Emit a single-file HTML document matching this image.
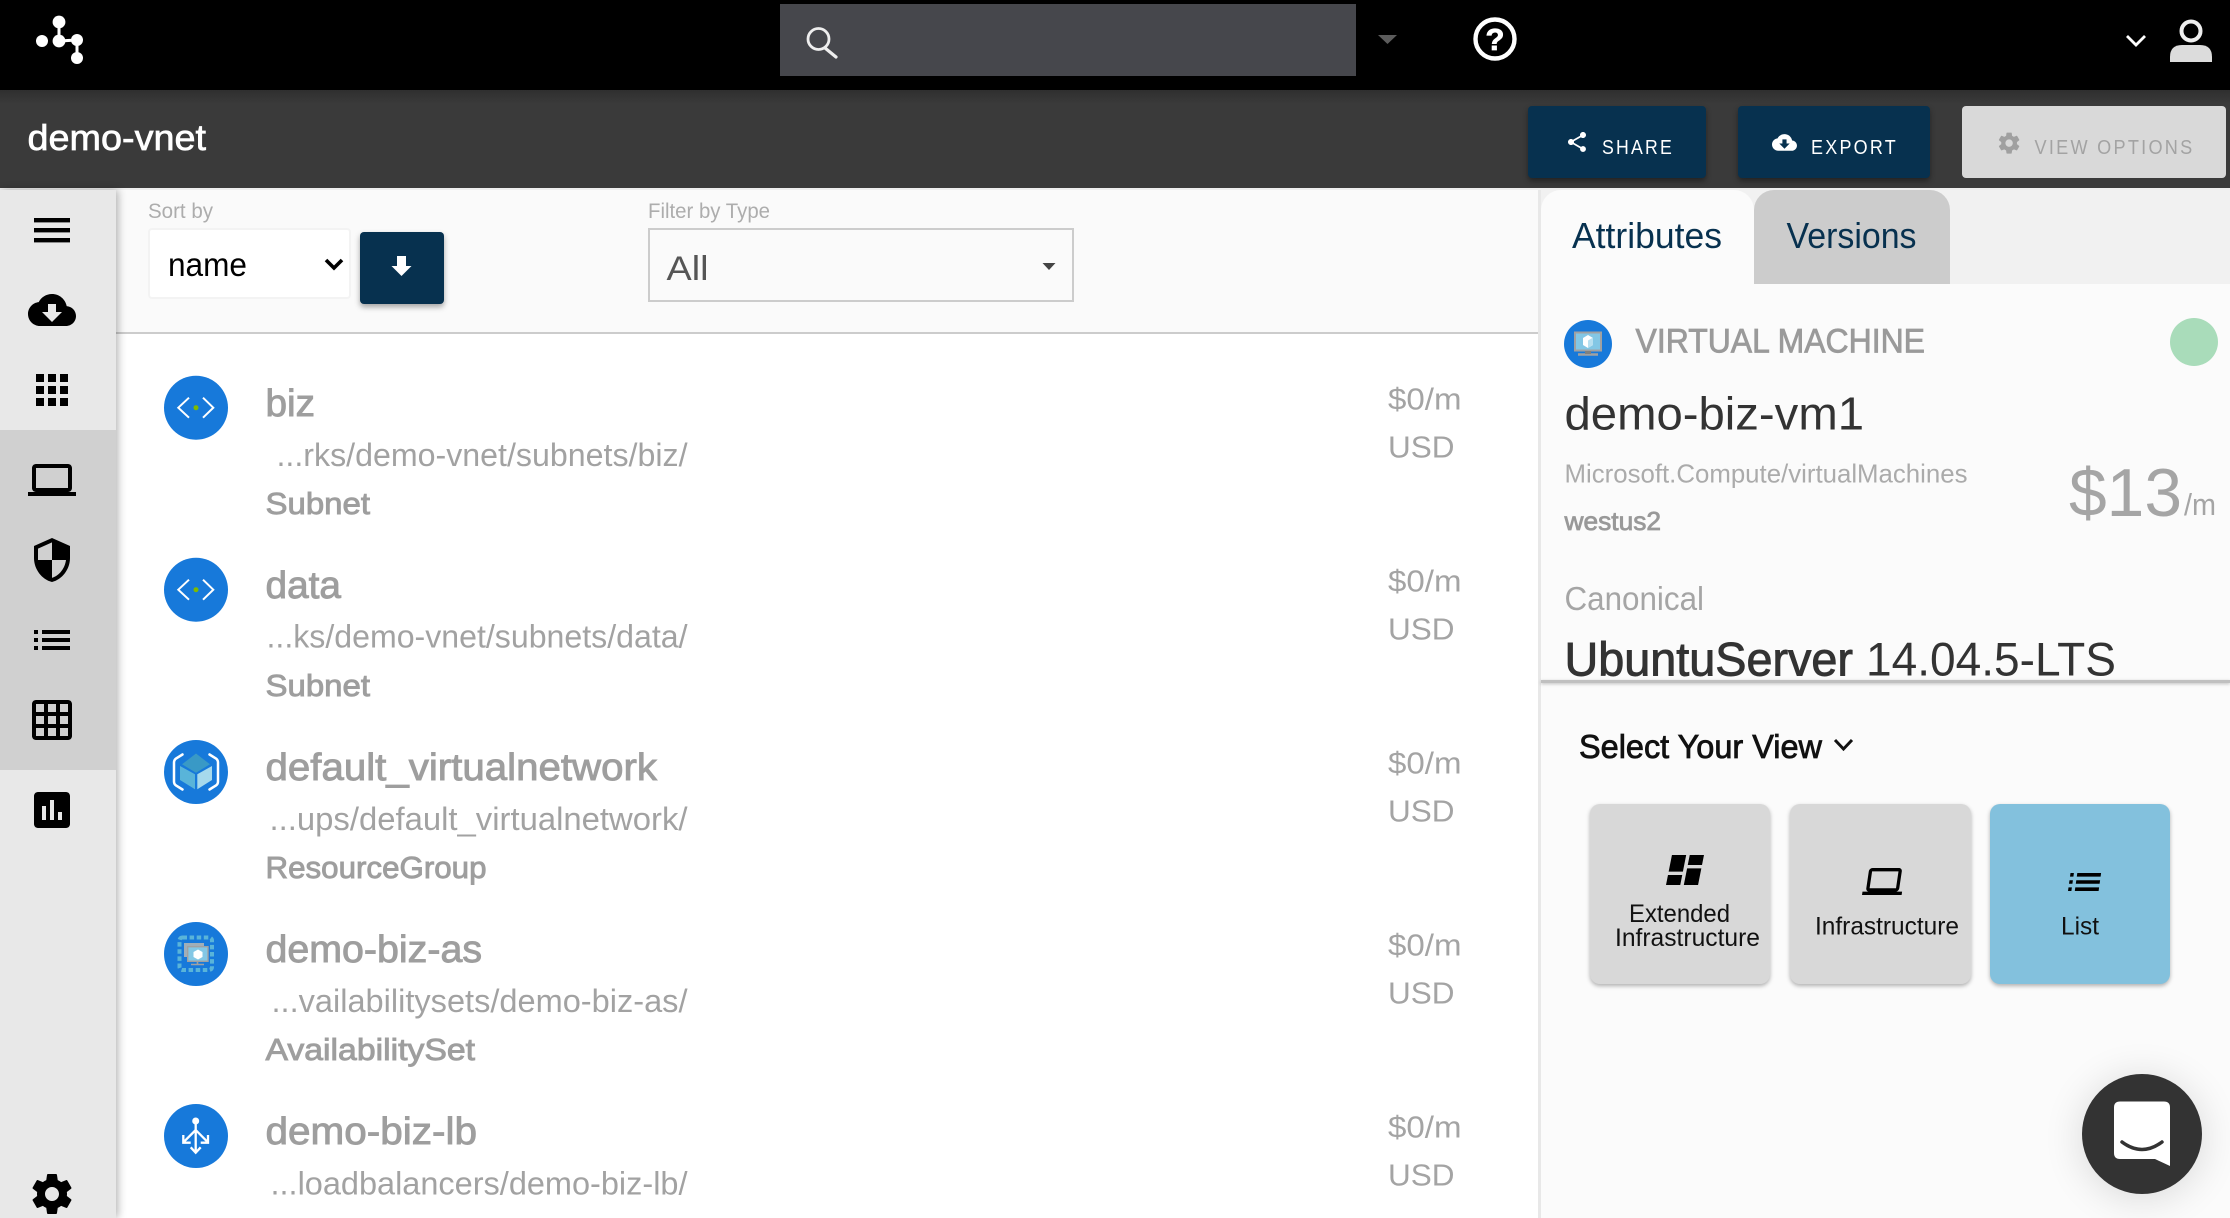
<!DOCTYPE html>
<html><head><meta charset="utf-8"><title>demo-vnet</title>
<style>
html,body{margin:0;padding:0;background:#fff}
#r{position:relative;width:2230px;height:1218px;overflow:hidden;background:#fff;font-family:"Liberation Sans",sans-serif}
#r div{position:absolute;box-sizing:border-box}
svg{position:absolute;left:0;top:0}
text{font-family:"Liberation Sans",sans-serif}
.n{font-size:38px;fill:#9e9e9e;stroke:#9e9e9e;stroke-width:.9}
.p{font-size:32px;fill:#a2a2a2}
.t{font-size:31px;fill:#9e9e9e;stroke:#9e9e9e;stroke-width:.9}
.c{font-size:31px;fill:#a4a4a4}
.b{font-size:20px;fill:#fff;letter-spacing:2.5px}
.l{font-size:21px;fill:#adadad}
.k{font-size:25px;fill:#111}
</style></head><body>
<div id="r">
<div style="left:0;top:0;width:2230px;height:90px;background:#000"></div>
<div style="left:0;top:90px;width:2230px;height:98px;background:linear-gradient(#2f2f2f,#3a3a3a 14px,#3a3a3a)"></div>
<div style="left:0;top:188px;width:2230px;height:2px;background:#eee"></div>
<div style="left:780px;top:4px;width:576px;height:72px;background:#46474c"></div>
<div style="left:1528px;top:106px;width:178px;height:72px;background:#07314f;border-radius:4px;box-shadow:0 3px 6px rgba(0,0,0,.4)"></div>
<div style="left:1738px;top:106px;width:192px;height:72px;background:#07314f;border-radius:4px;box-shadow:0 3px 6px rgba(0,0,0,.4)"></div>
<div style="left:1962px;top:106px;width:264px;height:72px;background:#d9d9d9;border-radius:4px"></div>
<div style="left:116px;top:190px;width:1422px;height:142px;background:#fafafa"></div>
<div style="left:116px;top:332px;width:1422px;height:2px;background:#ccc"></div>
<div style="left:0;top:190px;width:116px;height:1028px;background:#e8e8e8;box-shadow:2px 0 8px rgba(0,0,0,.3)"></div>
<div style="left:0;top:430px;width:116px;height:340px;background:#d0d0d0"></div>
<div style="left:148px;top:228px;width:203px;height:71px;background:#fff;border:2px solid #f3f3f3;border-radius:4px"></div>
<div style="left:360px;top:232px;width:84px;height:72px;background:#07314f;border-radius:4px;box-shadow:0 3px 6px rgba(0,0,0,.35)"></div>
<div style="left:648px;top:228px;width:426px;height:74px;border:2px solid #ccc;background:#fafafa"></div>
<div style="left:1538px;top:190px;width:692px;height:1028px;background:#fbfbfb;border-left:3px solid #e8e8e8"></div>
<div style="left:1541px;top:190px;width:689px;height:94px;background:#f1f1f1"></div>
<div style="left:1541px;top:190px;width:213px;height:94px;background:#fbfbfb;border-radius:20px 20px 0 0"></div>
<div style="left:1754px;top:190px;width:196px;height:94px;background:#ccc;border-radius:20px 20px 0 0"></div>
<div style="left:1541px;top:680px;width:689px;height:3px;background:#c0c0c0;box-shadow:0 1px 3px rgba(0,0,0,.25)"></div>
<div style="left:1590px;top:804px;width:180px;height:180px;background:#d8d8d8;border-radius:10px;box-shadow:0 2px 4px rgba(0,0,0,.3)"></div>
<div style="left:1790px;top:804px;width:181px;height:180px;background:#d8d8d8;border-radius:10px;box-shadow:0 2px 4px rgba(0,0,0,.3)"></div>
<div style="left:1990px;top:804px;width:180px;height:180px;background:#83c1dd;border-radius:10px;box-shadow:0 2px 4px rgba(0,0,0,.3)"></div>
<div style="left:2082px;top:1074px;width:120px;height:120px;background:#333;border-radius:50%;box-shadow:0 4px 40px rgba(0,0,0,.14)"></div>

<svg width="2230" height="1218" viewBox="0 0 2230 1218" xmlns="http://www.w3.org/2000/svg">
<!-- logo -->
<g fill="#fff" stroke="none"><circle cx="59" cy="22" r="6.4"/><circle cx="42" cy="41" r="6"/><circle cx="59" cy="41" r="6.4"/><circle cx="77" cy="40" r="6"/><circle cx="77" cy="58" r="6"/></g>
<path d="M59 22V41L77 40V58" fill="none" stroke="#fff" stroke-width="3"/>
<!-- search -->
<circle cx="818.5" cy="39" r="10.5" fill="none" stroke="#eee" stroke-width="2.8"/>
<path d="M825 48L836 57" stroke="#eee" stroke-width="3.2" stroke-linecap="round"/>
<path d="M1378 35H1397L1387.5 44Z" fill="#5c5c5c"/>
<circle cx="1495" cy="39" r="19.5" fill="none" stroke="#fff" stroke-width="4.4"/>
<text x="1495" y="50" text-anchor="middle" font-size="31" font-weight="700" fill="#fff" stroke="#fff" stroke-width=".8">?</text>
<path d="M2127 36L2136 45L2145 36" fill="none" stroke="#fff" stroke-width="2.8"/>
<circle cx="2191" cy="31" r="9.5" fill="none" stroke="#eee" stroke-width="4"/>
<path d="M2170 62V57Q2170 45 2182 45H2200Q2212 45 2212 57V62Z" fill="#dcdcdc"/>
<!-- subheader -->
<text x="27.5" y="150" font-size="36" fill="#fff" stroke="#fff" stroke-width=".7" textLength="178.5" lengthAdjust="spacingAndGlyphs">demo-vnet</text>
<g fill="#fff"><path transform="translate(1565,130)" d="M18 16.08c-.76 0-1.44.3-1.96.77L8.91 12.7c.05-.23.09-.46.09-.7s-.04-.47-.09-.7l7.05-4.11c.54.5 1.25.81 2.04.81 1.66 0 3-1.34 3-3s-1.34-3-3-3-3 1.34-3 3c0 .24.04.47.09.7L8.04 9.81C7.5 9.31 6.79 9 6 9c-1.66 0-3 1.34-3 3s1.34 3 3 3c.79 0 1.5-.31 2.04-.81l7.12 4.16c-.05.21-.08.43-.08.65 0 1.61 1.31 2.92 2.92 2.92 1.61 0 2.92-1.31 2.92-2.92s-1.31-2.92-2.92-2.92z"/>
<path transform="translate(1772,130) scale(1.04)" d="M19.35 10.04C18.67 6.59 15.64 4 12 4 9.11 4 6.6 5.64 5.35 8.04 2.34 8.36 0 10.91 0 14c0 3.31 2.69 6 6 6h13c2.76 0 5-2.24 5-5 0-2.64-2.05-4.78-4.65-4.96zM17 13l-5 5-5-5h3V9h4v4h3z"/></g>
<text class="b" x="1602" y="154" textLength="72" lengthAdjust="spacingAndGlyphs">SHARE</text>
<text class="b" x="1811" y="154" textLength="87" lengthAdjust="spacingAndGlyphs">EXPORT</text>
<path fill="#a0a0a0" transform="translate(1996.5,130.5) scale(1.05)" d="M19.43 12.98c.04-.32.07-.64.07-.98s-.03-.66-.07-.98l2.11-1.65c.19-.15.24-.42.12-.64l-2-3.46c-.12-.22-.39-.3-.61-.22l-2.49 1c-.52-.4-1.08-.73-1.69-.98l-.38-2.65C14.46 2.18 14.25 2 14 2h-4c-.25 0-.46.18-.49.42l-.38 2.65c-.61.25-1.17.59-1.69.98l-2.49-1c-.23-.09-.49 0-.61.22l-2 3.46c-.13.22-.07.49.12.64l2.11 1.65c-.04.32-.07.65-.07.98s.03.66.07.98l-2.11 1.65c-.19.15-.24.42-.12.64l2 3.46c.12.22.39.3.61.22l2.49-1c.52.4 1.08.73 1.69.98l.38 2.65c.03.24.24.42.49.42h4c.25 0 .46-.18.49-.42l.38-2.65c.61-.25 1.17-.59 1.69-.98l2.49 1c.23.09.49 0 .61-.22l2-3.46c.12-.22.07-.49-.12-.64l-2.11-1.65zM12 15.5c-1.93 0-3.5-1.57-3.5-3.5s1.57-3.5 3.5-3.5 3.5 1.57 3.5 3.5-1.57 3.5-3.5 3.5z"/>
<text x="2034.5" y="154" font-size="20" letter-spacing="2.5" fill="#a3a3a3" textLength="160" lengthAdjust="spacingAndGlyphs">VIEW OPTIONS</text>
<!-- sidebar icons -->
<g fill="#000">
<rect x="34" y="218" width="36" height="4.4"/><rect x="34" y="228" width="36" height="4.4"/><rect x="34" y="238" width="36" height="4.4"/>
<path transform="translate(28,286) scale(2)" d="M19.35 10.04C18.67 6.59 15.64 4 12 4 9.11 4 6.6 5.64 5.35 8.04 2.34 8.36 0 10.91 0 14c0 3.31 2.69 6 6 6h13c2.76 0 5-2.24 5-5 0-2.64-2.05-4.78-4.65-4.96zM17 13l-5 5-5-5h3V9h4v4h3z"/>
<path transform="translate(28,366) scale(2)" d="M4 8h4V4H4v4zm6 12h4v-4h-4v4zm-6 0h4v-4H4v4zm0-6h4v-4H4v4zm6 0h4v-4h-4v4zm6-10v4h4V4h-4zm-6 4h4V4h-4v4zm6 6h4v-4h-4v4zm0 6h4v-4h-4v4z"/>
<path transform="translate(28,456) scale(2)" d="M20 18c1.1 0 1.99-.9 1.99-2L22 6c0-1.1-.9-2-2-2H4c-1.1 0-2 .9-2 2v10c0 1.1.9 2 2 2H0v2h24v-2h-4zM4 6h16v10H4V6z"/>
<path transform="translate(28,536) scale(2)" d="M12 1L3 5v6c0 5.55 3.84 10.74 9 12 5.16-1.26 9-6.45 9-12V5l-9-4zm0 10.99h7c-.53 4.12-3.28 7.79-7 8.94V12H5V6.3l7-3.11v8.8z"/>
<path transform="translate(28,616) scale(2)" d="M3 13h2v-2H3v2zm0 4h2v-2H3v2zm0-8h2V7H3v2zm4 4h14v-2H7v2zm0 4h14v-2H7v2zM7 7v2h14V7H7z"/>
<path transform="translate(28,696) scale(2)" d="M20 2H4c-1.1 0-2 .9-2 2v16c0 1.1.9 2 2 2h16c1.1 0 2-.9 2-2V4c0-1.1-.9-2-2-2zM8 20H4v-4h4v4zm0-6H4v-4h4v4zm0-6H4V4h4v4zm6 12h-4v-4h4v4zm0-6h-4v-4h4v4zm0-6h-4V4h4v4zm6 12h-4v-4h4v4zm0-6h-4v-4h4v4zm0-6h-4V4h4v4z"/>
<path transform="translate(28,786) scale(2)" d="M19 3H5c-1.1 0-2 .9-2 2v14c0 1.1.9 2 2 2h14c1.1 0 2-.9 2-2V5c0-1.1-.9-2-2-2zM9 17H7v-7h2v7zm4 0h-2V7h2v10zm4 0h-2v-4h2v4z"/>
<path transform="translate(28,1170) scale(2)" d="M19.43 12.98c.04-.32.07-.64.07-.98s-.03-.66-.07-.98l2.11-1.65c.19-.15.24-.42.12-.64l-2-3.46c-.12-.22-.39-.3-.61-.22l-2.49 1c-.52-.4-1.08-.73-1.69-.98l-.38-2.65C14.46 2.18 14.25 2 14 2h-4c-.25 0-.46.18-.49.42l-.38 2.65c-.61.25-1.17.59-1.69.98l-2.49-1c-.23-.09-.49 0-.61.22l-2 3.46c-.13.22-.07.49.12.64l2.11 1.65c-.04.32-.07.65-.07.98s.03.66.07.98l-2.11 1.65c-.19.15-.24.42-.12.64l2 3.46c.12.22.39.3.61.22l2.49-1c.52.4 1.08.73 1.69.98l.38 2.65c.03.24.24.42.49.42h4c.25 0 .46-.18.49-.42l.38-2.65c.61-.25 1.17-.59 1.69-.98l2.49 1c.23.09.49 0 .61-.22l2-3.46c.12-.22.07-.49-.12-.64l-2.11-1.65zM12 15.5c-1.93 0-3.5-1.57-3.5-3.5s1.57-3.5 3.5-3.5 3.5 1.57 3.5 3.5-1.57 3.5-3.5 3.5z"/>
</g>
<!-- toolbar -->
<text class="l" x="148" y="218" textLength="65" lengthAdjust="spacingAndGlyphs">Sort by</text>
<text class="l" x="648" y="218" textLength="122" lengthAdjust="spacingAndGlyphs">Filter by Type</text>
<text x="168" y="276" font-size="33" fill="#000" textLength="79" lengthAdjust="spacingAndGlyphs">name</text>
<path d="M326 260L334 268L342 260" fill="none" stroke="#000" stroke-width="3.6"/>
<path d="M397 256H406V266H411.5L401.5 276L391.5 266H397Z" fill="#fff"/>
<text x="666.5" y="280" font-size="34" fill="#555" textLength="42" lengthAdjust="spacingAndGlyphs">All</text>
<path d="M1042.5 263H1055.5L1049 270Z" fill="#444"/>
<!-- list icons -->
<g fill="#1779da"><circle cx="196" cy="407.7" r="32"/><circle cx="196" cy="589.7" r="32"/><circle cx="196" cy="772" r="32"/><circle cx="196" cy="954" r="32"/><circle cx="196" cy="1136" r="32"/><circle cx="1588" cy="344" r="24"/></g>
<g fill="none" stroke="#fff" stroke-width="2"><path d="M189 397.7L178.3 407.7L189 417.7M203 397.7L213.3 407.7L203 417.7"/><path d="M189 579.7L178.3 589.7L189 599.7M203 579.7L213.3 589.7L203 599.7"/></g>
<circle cx="196" cy="407.7" r="2.5" fill="#7fba00"/><circle cx="196" cy="589.7" r="2.5" fill="#7fba00"/>
<!-- resource group -->
<path d="M182.5 754.5L176 758.5Q174 760 174 762.5V781.500Q174 784 176 785.500L182.5 789.5M209.5 754.5L216 758.5Q218 760 218 762.5V781.500Q218 784 216 785.500L209.5 789.5" fill="none" stroke="#fff" stroke-width="2.5" stroke-linecap="round"/>
<path d="M196 753.5L210 764.3L196 772.7L182 764.3Z" fill="#3999c6"/>
<path d="M180 766L195 774.3V789.3L180 780Z" fill="#59b4d9"/>
<path d="M197.3 774.3L212 766V780L197.3 789.3Z" fill="#a6d9ec"/>
<!-- availability set -->
<rect x="179.5" y="937.5" width="32.5" height="32.5" rx="3" fill="none" stroke="#59b4d9" stroke-width="4" stroke-dasharray="4.5 2.6"/>
<rect x="184" y="943" width="20" height="14" fill="#a0aeb8"/>
<rect x="187.7" y="946.7" width="20.3" height="14.6" fill="#83c7e5" stroke="#a0a1a2" stroke-width="1.4"/>
<path d="M198 949.5L202.5 952V957L198 959.5L193.500 957V952Z" fill="#fff"/>
<path d="M191 964.500H204M197.500 961V964" stroke="#a0a1a2" stroke-width="1.6" fill="none"/>
<!-- load balancer -->
<circle cx="195.700" cy="1121" r="3.5" fill="#fff"/>
<path d="M195.700 1121V1152M195.700 1130L184 1141.700M195.700 1130L207.300 1141.700M183.300 1135V1142.700H190.700M208 1135V1142.700H200.700M190.700 1147.300L195.700 1152.700L200.700 1147.300" fill="none" stroke="#fff" stroke-width="2.300"/>
<!-- VM icon -->
<rect x="1575" y="332.500" width="26" height="18" fill="#83c7e5" stroke="#a0a1a2" stroke-width="2"/>
<path d="M1588 335L1593 338V345L1588 348L1583 345V338Z" fill="#fff"/>
<path d="M1583 337.500L1588 340.500L1593 337.500V345L1588 348V340.500" fill="#b8e0f0"/>
<path d="M1578 354.500H1598" stroke="#a0a1a2" stroke-width="2.400"/><rect x="1585" y="351" width="6" height="3" fill="#808080"/>
<!-- list text -->
<text class="n" x="265.5" y="416" textLength="49.5" lengthAdjust="spacingAndGlyphs">biz</text>
<text class="p" x="276.5" y="466" textLength="411" lengthAdjust="spacingAndGlyphs">...rks/demo-vnet/subnets/biz/</text>
<text class="t" x="265.5" y="514" textLength="104.5" lengthAdjust="spacingAndGlyphs">Subnet</text>
<text class="n" x="265.5" y="598" textLength="75.5" lengthAdjust="spacingAndGlyphs">data</text>
<text class="p" x="266.5" y="647.500" textLength="421" lengthAdjust="spacingAndGlyphs">...ks/demo-vnet/subnets/data/</text>
<text class="t" x="265.5" y="696" textLength="104.5" lengthAdjust="spacingAndGlyphs">Subnet</text>
<text class="n" x="265.5" y="780" textLength="391.5" lengthAdjust="spacingAndGlyphs">default_virtualnetwork</text>
<text class="p" x="269.5" y="830" textLength="418" lengthAdjust="spacingAndGlyphs">...ups/default_virtualnetwork/</text>
<text class="t" x="265.5" y="878" textLength="221" lengthAdjust="spacingAndGlyphs">ResourceGroup</text>
<text class="n" x="265.5" y="962" textLength="216.5" lengthAdjust="spacingAndGlyphs">demo-biz-as</text>
<text class="p" x="271.5" y="1012" textLength="416" lengthAdjust="spacingAndGlyphs">...vailabilitysets/demo-biz-as/</text>
<text class="t" x="265.5" y="1060" textLength="209.5" lengthAdjust="spacingAndGlyphs">AvailabilitySet</text>
<text class="n" x="265.5" y="1144" textLength="211.5" lengthAdjust="spacingAndGlyphs">demo-biz-lb</text>
<text class="p" x="270.5" y="1194.5" textLength="417" lengthAdjust="spacingAndGlyphs">...loadbalancers/demo-biz-lb/</text>
<!-- prices -->
<text class="c" x="1388" y="409.5" textLength="73.5" lengthAdjust="spacingAndGlyphs">$0/m</text><text class="c" x="1388" y="457.5" textLength="66.5" lengthAdjust="spacingAndGlyphs">USD</text>
<text class="c" x="1388" y="591.5" textLength="73.5" lengthAdjust="spacingAndGlyphs">$0/m</text><text class="c" x="1388" y="639.5" textLength="66.5" lengthAdjust="spacingAndGlyphs">USD</text>
<text class="c" x="1388" y="773.5" textLength="73.5" lengthAdjust="spacingAndGlyphs">$0/m</text><text class="c" x="1388" y="821.5" textLength="66.5" lengthAdjust="spacingAndGlyphs">USD</text>
<text class="c" x="1388" y="955.5" textLength="73.5" lengthAdjust="spacingAndGlyphs">$0/m</text><text class="c" x="1388" y="1003.5" textLength="66.5" lengthAdjust="spacingAndGlyphs">USD</text>
<text class="c" x="1388" y="1137.5" textLength="73.5" lengthAdjust="spacingAndGlyphs">$0/m</text><text class="c" x="1388" y="1185.5" textLength="66.5" lengthAdjust="spacingAndGlyphs">USD</text>
<!-- right panel -->
<text x="1572" y="248" font-size="36" fill="#07314f" textLength="150" lengthAdjust="spacingAndGlyphs">Attributes</text>
<text x="1786.5" y="248" font-size="36" fill="#07314f" textLength="130" lengthAdjust="spacingAndGlyphs">Versions</text>
<text x="1635.5" y="352.500" font-size="34" fill="#9a9a9a" stroke="#9a9a9a" stroke-width=".8" textLength="289.5" lengthAdjust="spacingAndGlyphs">VIRTUAL MACHINE</text>
<circle cx="2194" cy="342" r="24" fill="#a9dcba"/>
<text x="1564.5" y="429.5" font-size="46" fill="#333" textLength="299.5" lengthAdjust="spacingAndGlyphs">demo-biz-vm1</text>
<text x="1564.5" y="482.5" font-size="26" fill="#ababab" textLength="403" lengthAdjust="spacingAndGlyphs">Microsoft.Compute/virtualMachines</text>
<text x="1564.5" y="530" font-size="26" fill="#999" stroke="#999" stroke-width=".8" textLength="96.5" lengthAdjust="spacingAndGlyphs">westus2</text>
<text x="2069" y="516" font-size="68" fill="#a5a5a5" textLength="113" lengthAdjust="spacingAndGlyphs">$13</text>
<text x="2184" y="515" font-size="31" fill="#a5a5a5" textLength="32" lengthAdjust="spacingAndGlyphs">/m</text>
<text x="1564.5" y="610" font-size="33" fill="#a5a5a5" textLength="139.5" lengthAdjust="spacingAndGlyphs">Canonical</text>
<text x="1564.5" y="675.500" font-size="47" fill="#333" stroke="#333" stroke-width=".9" textLength="288.5" lengthAdjust="spacingAndGlyphs">UbuntuServer</text>
<text x="1866" y="675.500" font-size="47" fill="#333" textLength="250" lengthAdjust="spacingAndGlyphs">14.04.5-LTS</text>
<text x="1579" y="758" font-size="33" fill="#111" stroke="#111" stroke-width=".8" textLength="243" lengthAdjust="spacingAndGlyphs">Select Your View</text>
<path d="M1835 740L1843.500 749L1852 740" fill="none" stroke="#111" stroke-width="3"/>
<!-- cards -->
<path fill="#000" transform="matrix(1.78 0 -.33 1.667 1667.600 850)" d="M3 13h8V3H3v10zm0 8h8v-6H3v6zm10 0h8V11h-8v10zm0-18v6h8V3h-8z"/>
<path fill="#000" transform="matrix(1.65 0 -.25 1.69 1867 861.250)" d="M20 18c1.1 0 1.99-.9 1.99-2L22 6c0-1.1-.9-2-2-2H4c-1.1 0-2 .9-2 2v10c0 1.1.9 2 2 2H0v2h24v-2h-4zM4 6h16v10H4V6z"/>
<path fill="#000" transform="matrix(1.7 0 -.25 1.8 2067.150 860.400)" d="M3 13h2v-2H3v2zm0 4h2v-2H3v2zm0-8h2V7H3v2zm4 4h14v-2H7v2zm0 4h14v-2H7v2zM7 7v2h14V7H7z"/>
<text class="k" x="1629" y="922" textLength="101" lengthAdjust="spacingAndGlyphs">Extended</text>
<text class="k" x="1615" y="946" textLength="145" lengthAdjust="spacingAndGlyphs">Infrastructure</text>
<text class="k" x="1815" y="934.5" textLength="144" lengthAdjust="spacingAndGlyphs">Infrastructure</text>
<text class="k" x="2061" y="934.5" textLength="38" lengthAdjust="spacingAndGlyphs">List</text>
<!-- chat -->
<path d="M2120 1101.500H2164Q2170 1101.500 2170 1107.500V1166L2155 1159H2120Q2114 1159 2114 1153V1107.500Q2114 1101.500 2120 1101.500Z" fill="#fff"/>
<path d="M2122 1142Q2142 1157 2162 1142" fill="none" stroke="#333" stroke-width="3.500" stroke-linecap="round"/>
</svg>
</div>
</body></html>
